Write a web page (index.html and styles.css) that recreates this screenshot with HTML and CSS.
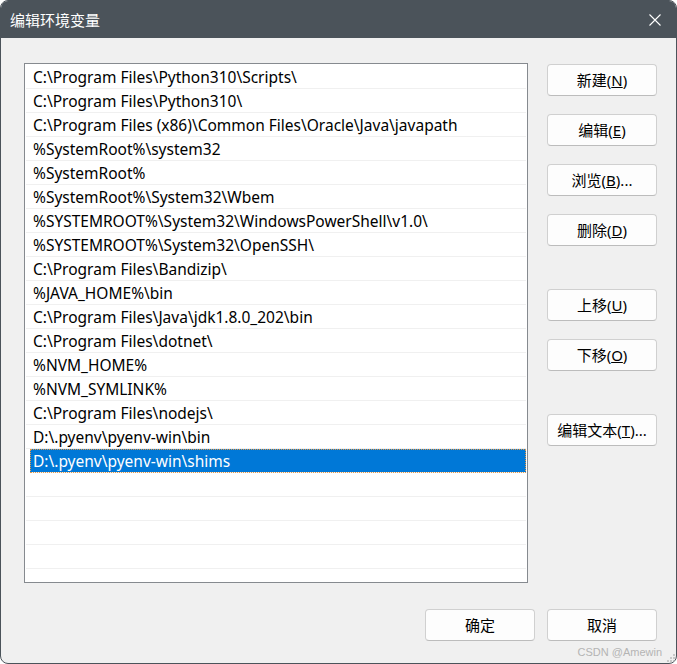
FILE: index.html
```html
<!DOCTYPE html>
<html lang="zh-CN">

<head>
    <meta charset="UTF-8">
    <title>编辑环境变量</title>
    <link rel="stylesheet" href="styles.css">
</head>

<body>
    <div class="window">
        <div class="titlebar">
            <span class="title">编辑环境变量</span>
            <svg class="close" width="12" height="12" viewBox="0 0 12 12">
                <path d="M0.5 0.5 L11.5 11.5 M11.5 0.5 L0.5 11.5" stroke="#fff" stroke-width="1.1" fill="none" />
            </svg>
        </div>

        <div class="content">
            <div class="main">
                <ul class="list">
                    <li>C:\Program Files\Python310\Scripts\</li>
                    <li>C:\Program Files\Python310\</li>
                    <li>C:\Program Files (x86)\Common Files\Oracle\Java\javapath</li>
                    <li>%SystemRoot%\system32</li>
                    <li>%SystemRoot%</li>
                    <li>%SystemRoot%\System32\Wbem</li>
                    <li>%SYSTEMROOT%\System32\WindowsPowerShell\v1.0\</li>
                    <li>%SYSTEMROOT%\System32\OpenSSH\</li>
                    <li>C:\Program Files\Bandizip\</li>
                    <li>%JAVA_HOME%\bin</li>
                    <li>C:\Program Files\Java\jdk1.8.0_202\bin</li>
                    <li>C:\Program Files\dotnet\</li>
                    <li>%NVM_HOME%</li>
                    <li>%NVM_SYMLINK%</li>
                    <li>C:\Program Files\nodejs\</li>
                    <li>D:\.pyenv\pyenv-win\bin</li>
                    <li class="selected">D:\.pyenv\pyenv-win\shims</li>
                    <li></li>
                    <li></li>
                    <li></li>
                    <li></li>
                    <li></li>
                </ul>

                <div class="side">
                    <button class="btn">新建(<u>N</u>)</button>
                    <button class="btn">编辑(<u>E</u>)</button>
                    <button class="btn">浏览(<u>B</u>)...</button>
                    <button class="btn">删除(<u>D</u>)</button>
                    <button class="btn group">上移(<u>U</u>)</button>
                    <button class="btn">下移(<u>O</u>)</button>
                    <button class="btn group">编辑文本(<u>T</u>)...</button>
                </div>
            </div>

            <div class="footer">
                <button class="btn">确定</button>
                <button class="btn">取消</button>
            </div>
        </div>

        <span class="watermark">CSDN @Amewin</span>
        <svg class="grip" width="10" height="10" viewBox="0 0 10 10">
            <rect x="8" y="2" width="2" height="2" />
            <rect x="5" y="5" width="2" height="2" />
            <rect x="8" y="5" width="2" height="2" />
            <rect x="2" y="8" width="2" height="2" />
            <rect x="5" y="8" width="2" height="2" />
            <rect x="8" y="8" width="2" height="2" />
        </svg>
    </div>
</body>

</html>
```

FILE: styles.css
```css
* {
    box-sizing: border-box;
}

body {
    margin: 0;
    background-color: #fff;
    font-family: "Noto Sans", "Noto Sans CJK SC", sans-serif;
    font-size: 15px;
    color: #000;
}

.window {
    position: relative;
    width: 677px;
    height: 664px;
    display: flex;
    flex-direction: column;
    background-color: #f0f0f0;
    border: 1px solid #4b535a;
    border-radius: 8px;
    overflow: hidden;
}

.titlebar {
    height: 37px;
    flex-shrink: 0;
    display: flex;
    justify-content: space-between;
    align-items: center;
    padding: 0 15px 0 9px;
    background-color: #4b535a;
    color: #fff;
}

.title {
    font-family: "Noto Sans CJK SC", sans-serif;
    font-size: 15px;
}

.content {
    flex: 1;
    display: flex;
    flex-direction: column;
    padding: 25px 19px 22px 23px;
}

.main {
    display: flex;
    column-gap: 19px;
}

.list {
    width: 504px;
    height: 520px;
    margin: 0;
    padding: 1px;
    list-style: none;
    background-color: #fff;
    border: 1px solid #868a8f;
    overflow: hidden;
    font-size: 15.5px;
}

.list li {
    height: 24px;
    line-height: 24px;
    padding-left: 7px;
    border-bottom: 1px solid #f0f0f0;
    white-space: nowrap;
}

.list li.selected {
    margin-left: 4px;
    padding-left: 3px;
    background-color: #0078d7;
    color: #fff;
    outline: 1px dotted #e59a4a;
    outline-offset: -1px;
}

.side {
    display: flex;
    flex-direction: column;
    row-gap: 18px;
    padding-top: 1px;
}

.btn {
    width: 110px;
    height: 32px;
    padding: 0 0 2px;
    font-family: "Noto Sans", "Noto Sans CJK SC", sans-serif;
    font-size: 15px;
    color: #000;
    background-color: #fdfdfd;
    border: 1px solid #d0d0d0;
    border-bottom-color: #bcbcbc;
    border-radius: 4px;
}

.btn.group {
    margin-top: 25px;
}

.footer {
    display: flex;
    justify-content: flex-end;
    column-gap: 12px;
    margin-top: 26px;
}

.watermark {
    position: absolute;
    right: 14px;
    bottom: 4px;
    font-family: "Liberation Sans", sans-serif;
    font-size: 11px;
    line-height: 14px;
    color: #b4b4b4;
}

.grip {
    position: absolute;
    right: 1px;
    bottom: 1px;
    fill: #c8c8c8;
}
```
